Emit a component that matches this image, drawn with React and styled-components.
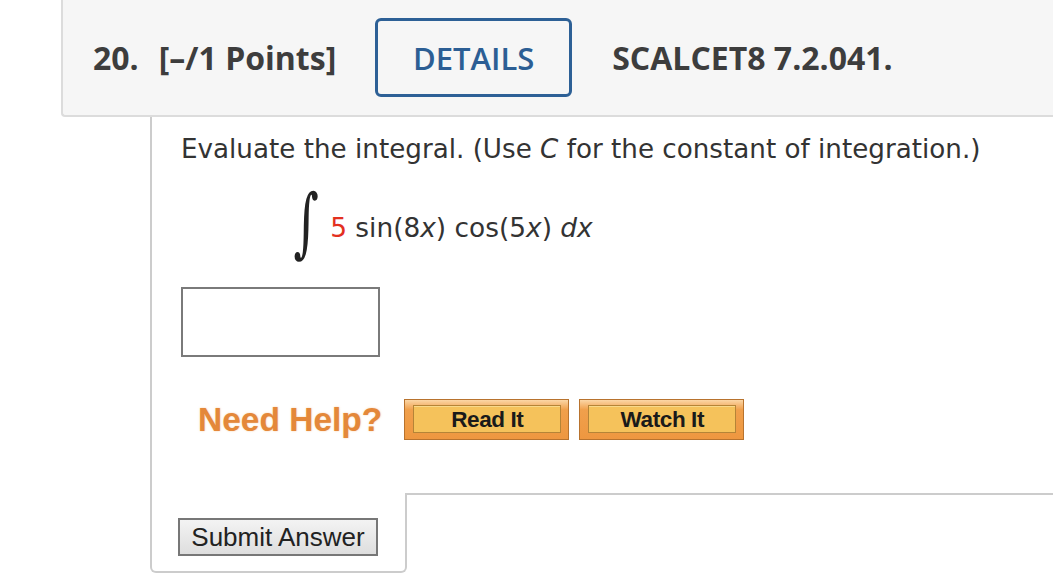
import styled, { createGlobalStyle } from "styled-components";

const GlobalStyle = createGlobalStyle`
  html, body {
    margin: 0;
    padding: 0;
    background: #fff;
    overflow: hidden;
  }
`;

const App = () => {
  return (
    <Page>
      <GlobalStyle />
      <Header>
        <Number>20.</Number>
        <Points>[–/1 Points]</Points>
        <DetailsButton>DETAILS</DetailsButton>
        <Ref>SCALCET8 7.2.041.</Ref>
      </Header>
      <Panel>
        <Body>
          <Prompt>
            Evaluate the integral. (Use <i>C</i> for the constant of integration.)
          </Prompt>
          <MathRow>
            <Integral>∫</Integral>
            <Expr>
              <Coef>5</Coef> sin(8<i>x</i>) cos(5<i>x</i>) <i>dx</i>
            </Expr>
          </MathRow>
          <AnswerBox />
          <HelpRow>
            <HelpLabel>Need Help?</HelpLabel>
            <HelpButton>
              <HelpInner>Read It</HelpInner>
            </HelpButton>
            <HelpButton>
              <HelpInner>Watch It</HelpInner>
            </HelpButton>
          </HelpRow>
        </Body>
        <Footer>
          <FooterMain>
            <SubmitButton>Submit Answer</SubmitButton>
          </FooterMain>
          <FooterAside />
        </Footer>
      </Panel>
    </Page>
  );
};

export default App;

const Page = styled.div`
  width: 1100px;
  padding-left: 61px;
  box-sizing: border-box;
`;

const Header = styled.div`
  display: flex;
  align-items: center;
  height: 115px;
  padding-left: 30px;
  background: #f6f6f6;
  border-left: 2px solid #dcdcdc;
  border-bottom: 2px solid #dcdcdc;
  border-bottom-left-radius: 4px;
  font-family: "Open Sans", "Noto Sans", sans-serif;
  font-size: 32px;
  font-weight: 700;
  color: #3d3d3d;
`;

const Number = styled.div`
  margin-right: 20px;
`;

const Points = styled.div`
  margin-right: 39px;
`;

const DetailsButton = styled.div`
  display: flex;
  align-items: center;
  justify-content: center;
  box-sizing: border-box;
  width: 197px;
  height: 79px;
  border: 3px solid #2d6096;
  border-radius: 6px;
  color: #2c5e94;
  font-weight: 600;
  font-size: 31px;
  margin-right: 40px;
`;

const Ref = styled.div``;

const Panel = styled.div`
  margin-left: 89px;
  font-family: "DejaVu Sans", Verdana, sans-serif;
  color: #333;
`;

const Body = styled.div`
  border-left: 2px solid #cccccc;
  padding: 17px 0 53px 29px;
`;

const Prompt = styled.div`
  font-size: 26.2px;
  line-height: 30px;
`;

const MathRow = styled.div`
  display: flex;
  align-items: center;
  height: 72px;
  margin-top: 23px;
  padding-left: 111px;
`;

const Integral = styled.span`
  font-family: "DejaVu Serif", serif;
  font-style: italic;
  font-size: 54px;
  line-height: 72px;
  display: inline-block;
  transform: scale(0.9, 1.4);
  margin-right: 10px;
  color: #222;
`;

const Expr = styled.span`
  font-size: 26.4px;
  margin-top: 8px;
`;

const Coef = styled.span`
  color: #e3301f;
`;

const AnswerBox = styled.div`
  width: 199px;
  height: 70px;
  box-sizing: border-box;
  border: 2px solid #7a7a7a;
  margin-top: 28px;
`;

const HelpRow = styled.div`
  display: flex;
  align-items: center;
  margin-top: 42px;
  padding-left: 17px;
`;

const HelpLabel = styled.div`
  font-family: "Liberation Sans", Arial, sans-serif;
  font-weight: 700;
  font-size: 33.5px;
  color: #e4883a;
  text-shadow: 0 0 2px rgba(240, 170, 100, 0.6);
  margin-right: 22px;
`;

const HelpButton = styled.div`
  box-sizing: border-box;
  width: 165px;
  height: 41px;
  padding: 5px 7px 6px 8px;
  margin-right: 10px;
  border: 1px solid #b8732e;
  background: linear-gradient(#fbd6a6, #f0a04c 25%, #ee9740);
`;

const HelpInner = styled.div`
  display: flex;
  align-items: center;
  justify-content: center;
  height: 100%;
  box-sizing: border-box;
  border: 1px solid #b58437;
  box-shadow: inset 0 1px 0 #f9d98a;
  background: #f5c25b;
  font-family: "Liberation Sans", Arial, sans-serif;
  font-weight: 700;
  font-size: 22.5px;
  color: #1a1a1a;
  letter-spacing: -0.4px;
  padding-top: 2px;
`;

const Footer = styled.div`
  display: flex;
  height: 80px;
`;

const FooterMain = styled.div`
  box-sizing: border-box;
  width: 257px;
  padding: 25px 0 0 26px;
  border: 2px solid #cccccc;
  border-top: none;
  border-radius: 0 0 6px 6px;
`;

const FooterAside = styled.div`
  flex: 1;
  border-top: 2px solid #cccccc;
`;

const SubmitButton = styled.div`
  box-sizing: border-box;
  width: 200px;
  height: 38px;
  display: flex;
  align-items: center;
  justify-content: center;
  border: 2px solid #777;
  background: linear-gradient(#f3f3f3, #dedede);
  font-family: "Liberation Sans", Arial, sans-serif;
  font-size: 26px;
  color: #222;
`;
